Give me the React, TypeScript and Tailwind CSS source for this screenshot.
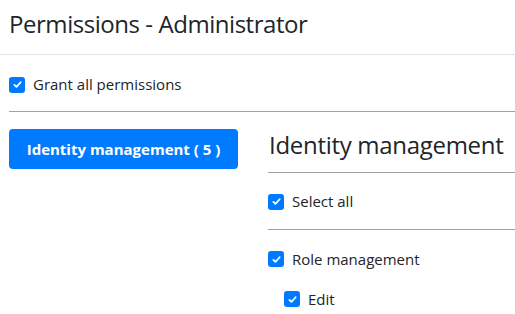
import React from "react";

function Check({ className = "" }: { className?: string }) {
  return (
    <span className={`inline-flex h-4 w-4 shrink-0 items-center justify-center rounded-[3px] bg-[#007bff] ${className}`}>
      <svg viewBox="0 0 8 8" className="h-[9px] w-[9px]">
        <path d="M1.2 4.3 L3.1 6.1 L6.8 2" fill="none" stroke="#fff" strokeWidth="1.6" strokeLinecap="round" strokeLinejoin="round" />
      </svg>
    </span>
  );
}

export default function App() {
  return (
    <div className="h-[314px] w-[515px] overflow-hidden bg-white text-[#212529]" style={{ fontFamily: '"Open Sans", "Noto Sans", sans-serif' }}>
      <div className="flex h-[55px] items-center border-b border-[#dee2e6] pb-[6px] pl-[9px]">
        <h5 className="text-[24px] leading-[30px] tracking-[-0.45px]">Permissions - Administrator</h5>
      </div>
      <div className="pl-[9px]">
        <div className="flex h-[57px] items-center gap-2 border-b border-[#a0a0a0] pt-[3px]">
          <Check />
          <span className="text-[15px]">Grant all permissions</span>
        </div>
        <div className="flex pt-[17px]">
          <div className="w-[229px] shrink-0">
            <div className="flex h-[40px] items-center justify-center rounded-[4px] bg-[#007bff] text-[15px] font-bold text-white">
              Identity management ( 5 )
            </div>
          </div>
          <div className="ml-[30px] flex-1">
            <div className="flex h-[44px] items-center border-b border-[#a0a0a0] pl-[1px] pb-[12px]">
              <h4 className="text-[24px] leading-[30px] tracking-[-0.3px]">Identity management</h4>
            </div>
            <div className="flex h-[57px] items-center gap-2 border-b border-[#a0a0a0] pt-[1px]">
              <Check />
              <span className="text-[15px]">Select all</span>
            </div>
            <div className="mt-[9px] flex h-[40px] items-center gap-2">
              <Check />
              <span className="text-[15px]">Role management</span>
            </div>
            <div className="flex h-[40px] items-center gap-2 pl-[16px]">
              <Check />
              <span className="text-[15px]">Edit</span>
            </div>
          </div>
        </div>
      </div>
    </div>
  );
}
